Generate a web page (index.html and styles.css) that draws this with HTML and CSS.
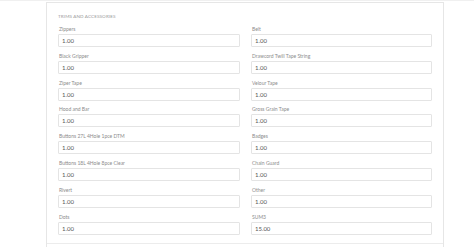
FILE: index.html
```html
<!DOCTYPE html>
<html>
<head>
<meta charset="utf-8">
<link rel="stylesheet" href="styles.css">
</head>
<body>
<div class="card">
  <div class="section">
    <div class="title">TRIMS AND ACCESSORIES</div>
    <div class="grid">
      <div class="field"><label>Zippers</label><div class="input">1.00</div></div>
      <div class="field"><label>Belt</label><div class="input">1.00</div></div>
      <div class="field"><label>Black Gripper</label><div class="input">1.00</div></div>
      <div class="field"><label>Drawcord Twill Tape String</label><div class="input">1.00</div></div>
      <div class="field"><label>Ziper Tape</label><div class="input">1.00</div></div>
      <div class="field"><label>Velour Tape</label><div class="input">1.00</div></div>
      <div class="field"><label>Hood and Bar</label><div class="input">1.00</div></div>
      <div class="field"><label>Gross Grain Tape</label><div class="input">1.00</div></div>
      <div class="field"><label>Buttons 27L 4Hole 1pce DTM</label><div class="input">1.00</div></div>
      <div class="field"><label>Badges</label><div class="input">1.00</div></div>
      <div class="field"><label>Buttons 18L 4Hole 8pce Clear</label><div class="input">1.00</div></div>
      <div class="field"><label>Chain Guard</label><div class="input">1.00</div></div>
      <div class="field"><label>Rivert</label><div class="input">1.00</div></div>
      <div class="field"><label>Other</label><div class="input">1.00</div></div>
      <div class="field"><label>Dots</label><div class="input">1.00</div></div>
      <div class="field"><label>SUM3</label><div class="input">15.00</div></div>
    </div>
  </div>
  <div class="spacer"></div>
</div>
</body>
</html>
```
FILE: styles.css
```css
html, body {
  margin: 0;
  padding: 0;
  background: #ffffff;
  font-family: Lato, "Liberation Sans", sans-serif;
}
body {
  padding-top: 1px;
  border-top: 1px solid #f0f0f0;
}
.card {
  margin-left: 46px;
  width: 396px;
  border: 1px solid #e6e6e6;
  border-bottom: none;
}
.section {
  padding: 9px 11px 8px 11px;
  border-bottom: 1px solid #ececec;
}
.title {
  font-size: 4.6px;
  line-height: 8px;
  color: #9a9a9a;
  letter-spacing: 0.1px;
  margin-bottom: 5px;
}
.grid {
  display: grid;
  grid-template-columns: 182px 181px;
  column-gap: 11px;
  row-gap: 4.8px;
}
.field label {
  display: block;
  font-size: 5px;
  line-height: 8px;
  color: #8c8c8c;
  margin-bottom: 1px;
  padding-left: 1px;
}
.input {
  box-sizing: border-box;
  height: 13px;
  border: 1px solid #e4e4e4;
  border-radius: 1px;
  font-size: 6px;
  line-height: 11px;
  color: #555555;
  padding-left: 3px;
}
.spacer {
  height: 3px;
}
```
